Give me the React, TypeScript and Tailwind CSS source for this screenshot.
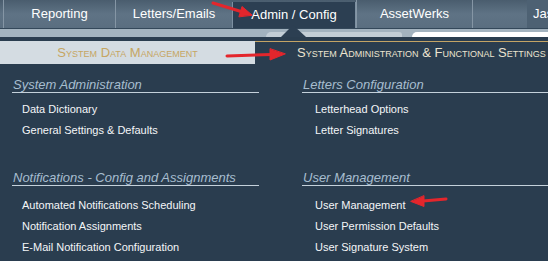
import React from "react";

const font = { fontFamily: '"Liberation Sans", Arial, sans-serif' };

type Section = { title: string; items: string[]; gap: string };

const leftSections: Section[] = [
  {
    title: "System Administration",
    items: ["Data Dictionary", "General Settings & Defaults"],
    gap: "mt-[6px]",
  },
  {
    title: "Notifications - Config and Assignments",
    items: [
      "Automated Notifications Scheduling",
      "Notification Assignments",
      "E-Mail Notification Configuration",
    ],
    gap: "mt-[9px]",
  },
];

const rightSections: Section[] = [
  {
    title: "Letters Configuration",
    items: ["Letterhead Options", "Letter Signatures"],
    gap: "mt-[6px]",
  },
  {
    title: "User Management",
    items: ["User Management", "User Permission Defaults", "User Signature System"],
    gap: "mt-[9px]",
  },
];

function MenuSection({ section, indent, first }: { section: Section; indent: string; first?: boolean }) {
  return (
    <div className={first ? "" : "mt-[29px]"}>
      <div className="h-[16px] leading-[16px] text-[13px] italic text-[#a7bdcf] border-b border-[#c4d1db] pl-[1px]">
        {section.title}
      </div>
      <ul className={section.gap}>
        {section.items.map((item) => (
          <li key={item} className={`h-[21px] leading-[21px] text-[11px] text-[#f4f6f8] ${indent}`}>
            {item}
          </li>
        ))}
      </ul>
    </div>
  );
}

function TopTab({ label, width, active }: { label: string; width: string; active?: boolean }) {
  if (active) {
    return (
      <div
        className={`${width} shrink-0 mt-[2px] bg-[#2c3f52] border-l border-r border-[#7d90a1] flex items-center justify-center text-[13px] text-white`}
      >
        {label}
      </div>
    );
  }
  return (
    <div className={`${width} shrink-0 border-l border-[#8596a5] flex items-center justify-center text-[13px] text-white`}>
      {label}
    </div>
  );
}

export default function App() {
  return (
    <div className="relative w-[548px] h-[261px] overflow-hidden bg-[#2a3d4f]" style={font}>
      {/* main nav */}
      <div className="h-[29px] flex bg-gradient-to-b from-[#4a5d6e] via-[#5f7385] to-[#5a6e80] border-b border-[#34485a]">
        <div className="w-[3px] shrink-0" />
        <TopTab label="Reporting" width="w-[112px]" />
        <TopTab label="Letters/Emails" width="w-[117px]" />
        <TopTab label="Admin / Config" width="w-[124px]" active />
        <TopTab label="AssetWerks" width="w-[116px]" />
        <div className="w-[55px] shrink-0 border-l border-[#8596a5]" />
        <div className="flex-1 min-w-0 overflow-hidden bg-[#4d6173] flex items-center pl-[6px] text-[13px] text-white whitespace-nowrap">
          Jason
        </div>
      </div>

      {/* strip behind the sub tabs */}
      <div className="h-[8px] bg-[#a3b3bf] flex items-end">
        <div className="ml-[266px] w-[136px] h-[5px] bg-[#c3ced6] rounded-tl-[10px] rounded-tr-[6px]" />
        <div className="ml-[10px] flex-1 h-[5px] bg-white rounded-tl-[8px]" />
      </div>
      <div className="h-[4px] bg-[#2a3d4f]" />

      {/* sub tabs */}
      <div className="h-[23px] flex [font-variant-caps:small-caps] text-[13px]">
        <div className="w-[255px] shrink-0 bg-[#d4dce2] flex items-center justify-center text-[#c6a662]">
          System Data Management
        </div>
        <div className="flex-1 min-w-0 bg-[#2a3d4f] border-t border-[#c4a465] flex items-center pl-[42px] text-[#ece4cf] whitespace-nowrap overflow-hidden">
          System Administration &amp; Functional Settings
        </div>
      </div>

      {/* menu content */}
      <div className="grid grid-cols-[290px_1fr] pt-[13px]">
        <div className="pl-[12px] pr-[31px]">
          {leftSections.map((s, i) => (
            <MenuSection key={s.title} section={s} indent="pl-[10px]" first={i === 0} />
          ))}
        </div>
        <div className="pl-[12px]">
          {rightSections.map((s, i) => (
            <MenuSection key={s.title} section={s} indent="pl-[13px]" first={i === 0} />
          ))}
        </div>
      </div>

      {/* notch under active tab and red arrows */}
      <svg className="absolute left-0 top-0 pointer-events-none" width="548" height="261">
        <polygon points="281,37 293,25 306,37" fill="#2c3f52" />
        <g fill="#e4262c" stroke="#e4262c" strokeLinecap="round">
          <line x1="213" y1="3" x2="241" y2="11.5" strokeWidth="3" />
          <polygon points="239,16.5 242,6.5 252,15" strokeWidth="1" strokeLinejoin="round" />
          <line x1="227" y1="56" x2="271" y2="54.5" strokeWidth="3" />
          <polygon points="270,49 270,60 285,54" strokeWidth="1" strokeLinejoin="round" />
          <line x1="446" y1="199" x2="423" y2="201" strokeWidth="3" />
          <polygon points="424,196 424,206.5 411,201.5" strokeWidth="1" strokeLinejoin="round" />
        </g>
      </svg>
    </div>
  );
}
